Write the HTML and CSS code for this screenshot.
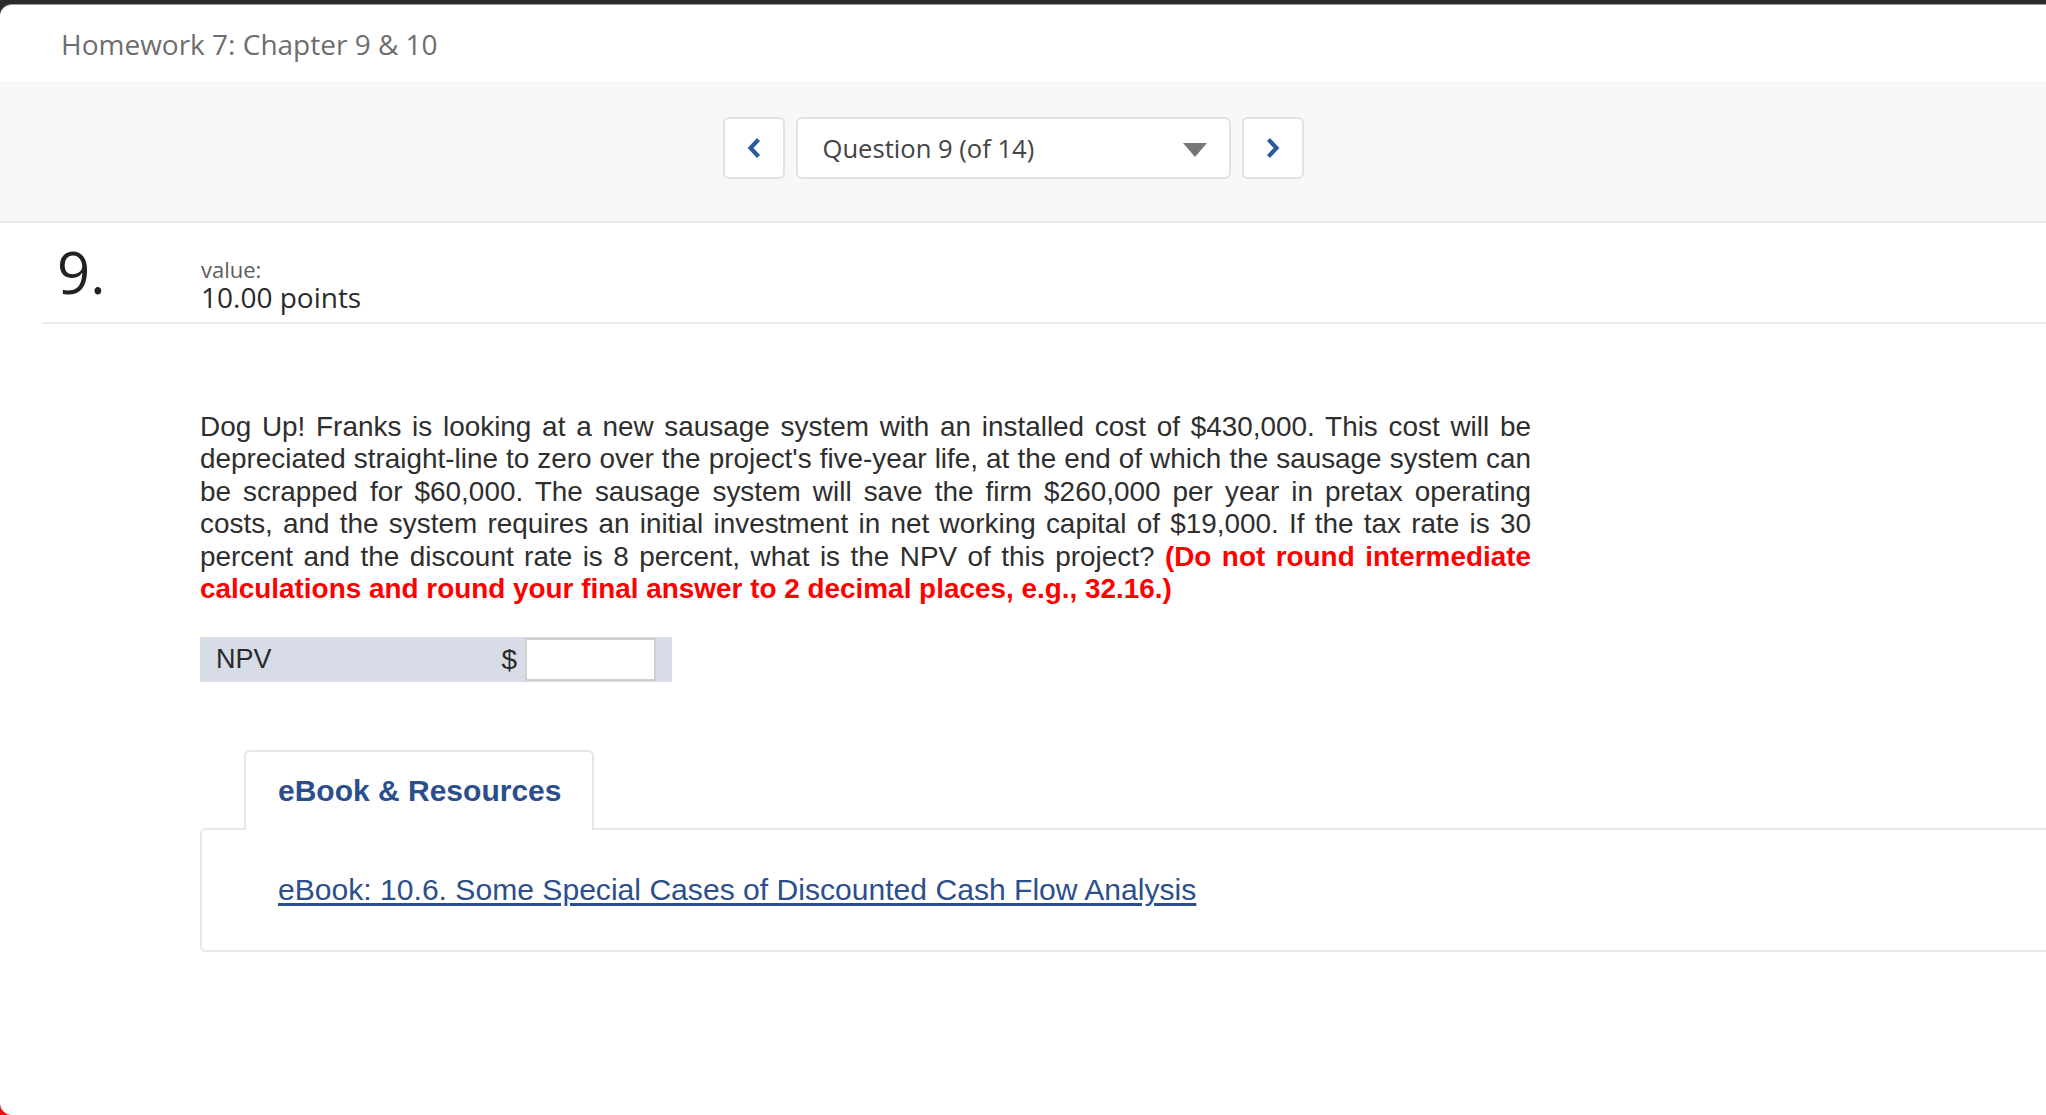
FILE: index.html
```html
<!DOCTYPE html>
<html lang="en">
<head>
<meta charset="utf-8">
<title>Homework 7: Chapter 9 &amp; 10</title>
<link rel="stylesheet" href="styles.css">
</head>
<body>
<div class="screen">
  <div class="frame">
    <header class="top">
      <h1 class="title">Homework 7: Chapter 9 &amp; 10</h1>
    </header>
    <nav class="qnav">
      <button class="navbtn" aria-label="Previous question">
        <svg width="14" height="22" viewBox="0 0 14 22"><polyline points="11.5,2.5 3.5,11 11.5,19.5" fill="none" stroke="#2b5b9c" stroke-width="4.2" stroke-linejoin="miter" stroke-linecap="butt"/></svg>
      </button>
      <div class="qselect">
        <span class="qselect-text">Question 9 (of 14)</span>
        <span class="caret"></span>
      </div>
      <button class="navbtn" aria-label="Next question">
        <svg width="14" height="22" viewBox="0 0 14 22"><polyline points="2.5,2.5 10.5,11 2.5,19.5" fill="none" stroke="#2b5b9c" stroke-width="4.2" stroke-linejoin="miter" stroke-linecap="butt"/></svg>
      </button>
    </nav>
    <section class="qhead">
      <div class="qnum">9.</div>
      <div class="qmeta">
        <div class="qvalue-label">value:</div>
        <div class="qvalue">10.00 points</div>
      </div>
    </section>
    <main class="qbody">
      <p class="prompt">Dog Up! Franks is looking at a new sausage system with an installed cost of $430,000. This cost will be depreciated straight-line to zero over the project's five-year life, at the end of which the sausage system can be scrapped for $60,000. The sausage system will save the firm $260,000 per year in pretax operating costs, and the system requires an initial investment in net working capital of $19,000. If the tax rate is 30 percent and the discount rate is 8 percent, what is the NPV of this project? <strong class="note">(Do not round intermediate calculations and round your final answer to 2 decimal places, e.g., 32.16.)</strong></p>
      <div class="npv">
        <span class="npv-label">NPV</span>
        <span class="npv-cur">$</span>
        <input class="npv-input" type="text" aria-label="NPV">
      </div>
      <div class="resources">
        <div class="tabs">
          <div class="tab">eBook &amp; Resources</div>
        </div>
        <div class="panel">
          <a class="ebook-link" href="#">eBook: 10.6. Some Special Cases of Discounted Cash Flow Analysis</a>
        </div>
      </div>
    </main>
  </div>
</div>
</body>
</html>
```

FILE: styles.css
```css
* { box-sizing: border-box; }
html, body { margin: 0; padding: 0; }
body { width: 2046px; height: 1115px; overflow: hidden; }

.screen {
  height: 1115px;
  background: linear-gradient(to bottom, #2b2b2b 0, #2b2b2b 60%, #f01010 60%, #f01010 100%);
  padding-top: 4px;
  overflow: hidden;
}
.frame {
  height: 1111px;
  background: #ffffff;
  border-top: 1px solid #9a9a9a;
  border-top-left-radius: 12px;
  border-bottom-left-radius: 12px;
  overflow: hidden;
  font-family: "Open Sans", "Liberation Sans", sans-serif;
}

.top {
  height: 76px;
  padding: 20px 0 0 61px;
}
.title {
  margin: 0;
  font-family: "Open Sans", sans-serif;
  font-weight: 400;
  font-size: 28px;
  line-height: 38px;
  color: #6e6e6e;
}

.qnav {
  height: 142px;
  background: #f8f8f8;
  border-bottom: 2px solid #e9e9e9;
  display: flex;
  justify-content: center;
  align-items: flex-start;
  gap: 11px;
  padding: 36px 20px 0 0;
}
.navbtn {
  width: 62px;
  height: 62px;
  margin: 0;
  padding: 0;
  background: #ffffff;
  border: 2px solid #e2e2e2;
  border-radius: 6px;
  display: flex;
  align-items: center;
  justify-content: center;
}
.qselect {
  width: 435px;
  height: 62px;
  background: #ffffff;
  border: 2px solid #e2e2e2;
  border-radius: 6px;
  display: flex;
  align-items: center;
  justify-content: space-between;
  padding: 0 22px 0 25px;
}
.qselect-text {
  font-family: "Open Sans", sans-serif;
  font-size: 25.6px;
  color: #444444;
}
.caret {
  width: 0;
  height: 0;
  border-left: 12.5px solid transparent;
  border-right: 12.5px solid transparent;
  border-top: 14px solid #777777;
  margin-top: 4px;
}

.qhead {
  margin-left: 42px;
  display: flex;
  align-items: flex-start;
  padding: 19px 0 9px 0;
  border-bottom: 2px solid #ececec;
}
.qnum {
  width: 159px;
  padding-left: 15px;
  font-family: "Open Sans", sans-serif;
  font-size: 58px;
  line-height: 60px;
  color: #222222;
}
.qmeta {
  padding-top: 15px;
}
.qvalue-label {
  font-size: 22px;
  line-height: 24px;
  color: #5e5e5e;
}
.qvalue {
  font-size: 28px;
  line-height: 32px;
  color: #2a2a2a;
}

.qbody {
  padding-left: 200px;
}
.prompt {
  width: 1331px;
  margin: 87px 0 0 0;
  font-family: "Liberation Sans", Arial, sans-serif;
  font-size: 27.9px;
  line-height: 32.4px;
  color: #2e2e2e;
  text-align: justify;
}
.note {
  color: #ff0000;
  font-weight: 700;
}

.npv {
  margin-top: 32px;
  width: 472px;
  height: 45px;
  background: #d8dce7;
  display: flex;
  align-items: center;
  padding: 1px 16px;
  font-family: "Liberation Sans", Arial, sans-serif;
  font-size: 27px;
  color: #2a2a2a;
}
.npv-label { flex: 1; }
.npv-cur { margin-right: 8px; font-size: 28px; }
.npv-input {
  width: 131px;
  height: 43px;
  margin: 0;
  border: 2px solid #d0d0d0;
  background: #ffffff;
  padding: 0 6px;
  font-size: 24px;
}

.resources {
  margin-top: 68px;
  margin-right: -20px;
  font-family: "Liberation Sans", Arial, sans-serif;
}
.tabs {
  display: flex;
  padding-left: 44px;
}
.tab {
  width: 350px;
  height: 80px;
  padding: 0 0 0 32px;
  display: flex;
  align-items: center;
  background: #ffffff;
  border: 2px solid #e6e6e6;
  border-bottom: none;
  border-radius: 6px 6px 0 0;
  margin-bottom: -2px;
  position: relative;
  z-index: 1;
  font-weight: 700;
  font-size: 30px;
  color: #2b4f8c;
}
.panel {
  height: 124px;
  border: 2px solid #e8e8e8;
  border-radius: 6px;
  padding: 42px 0 0 76px;
}
.ebook-link {
  font-size: 30.1px;
  line-height: 36px;
  color: #2b4f8c;
  text-decoration: underline;
  text-underline-offset: 3px;
}
```
